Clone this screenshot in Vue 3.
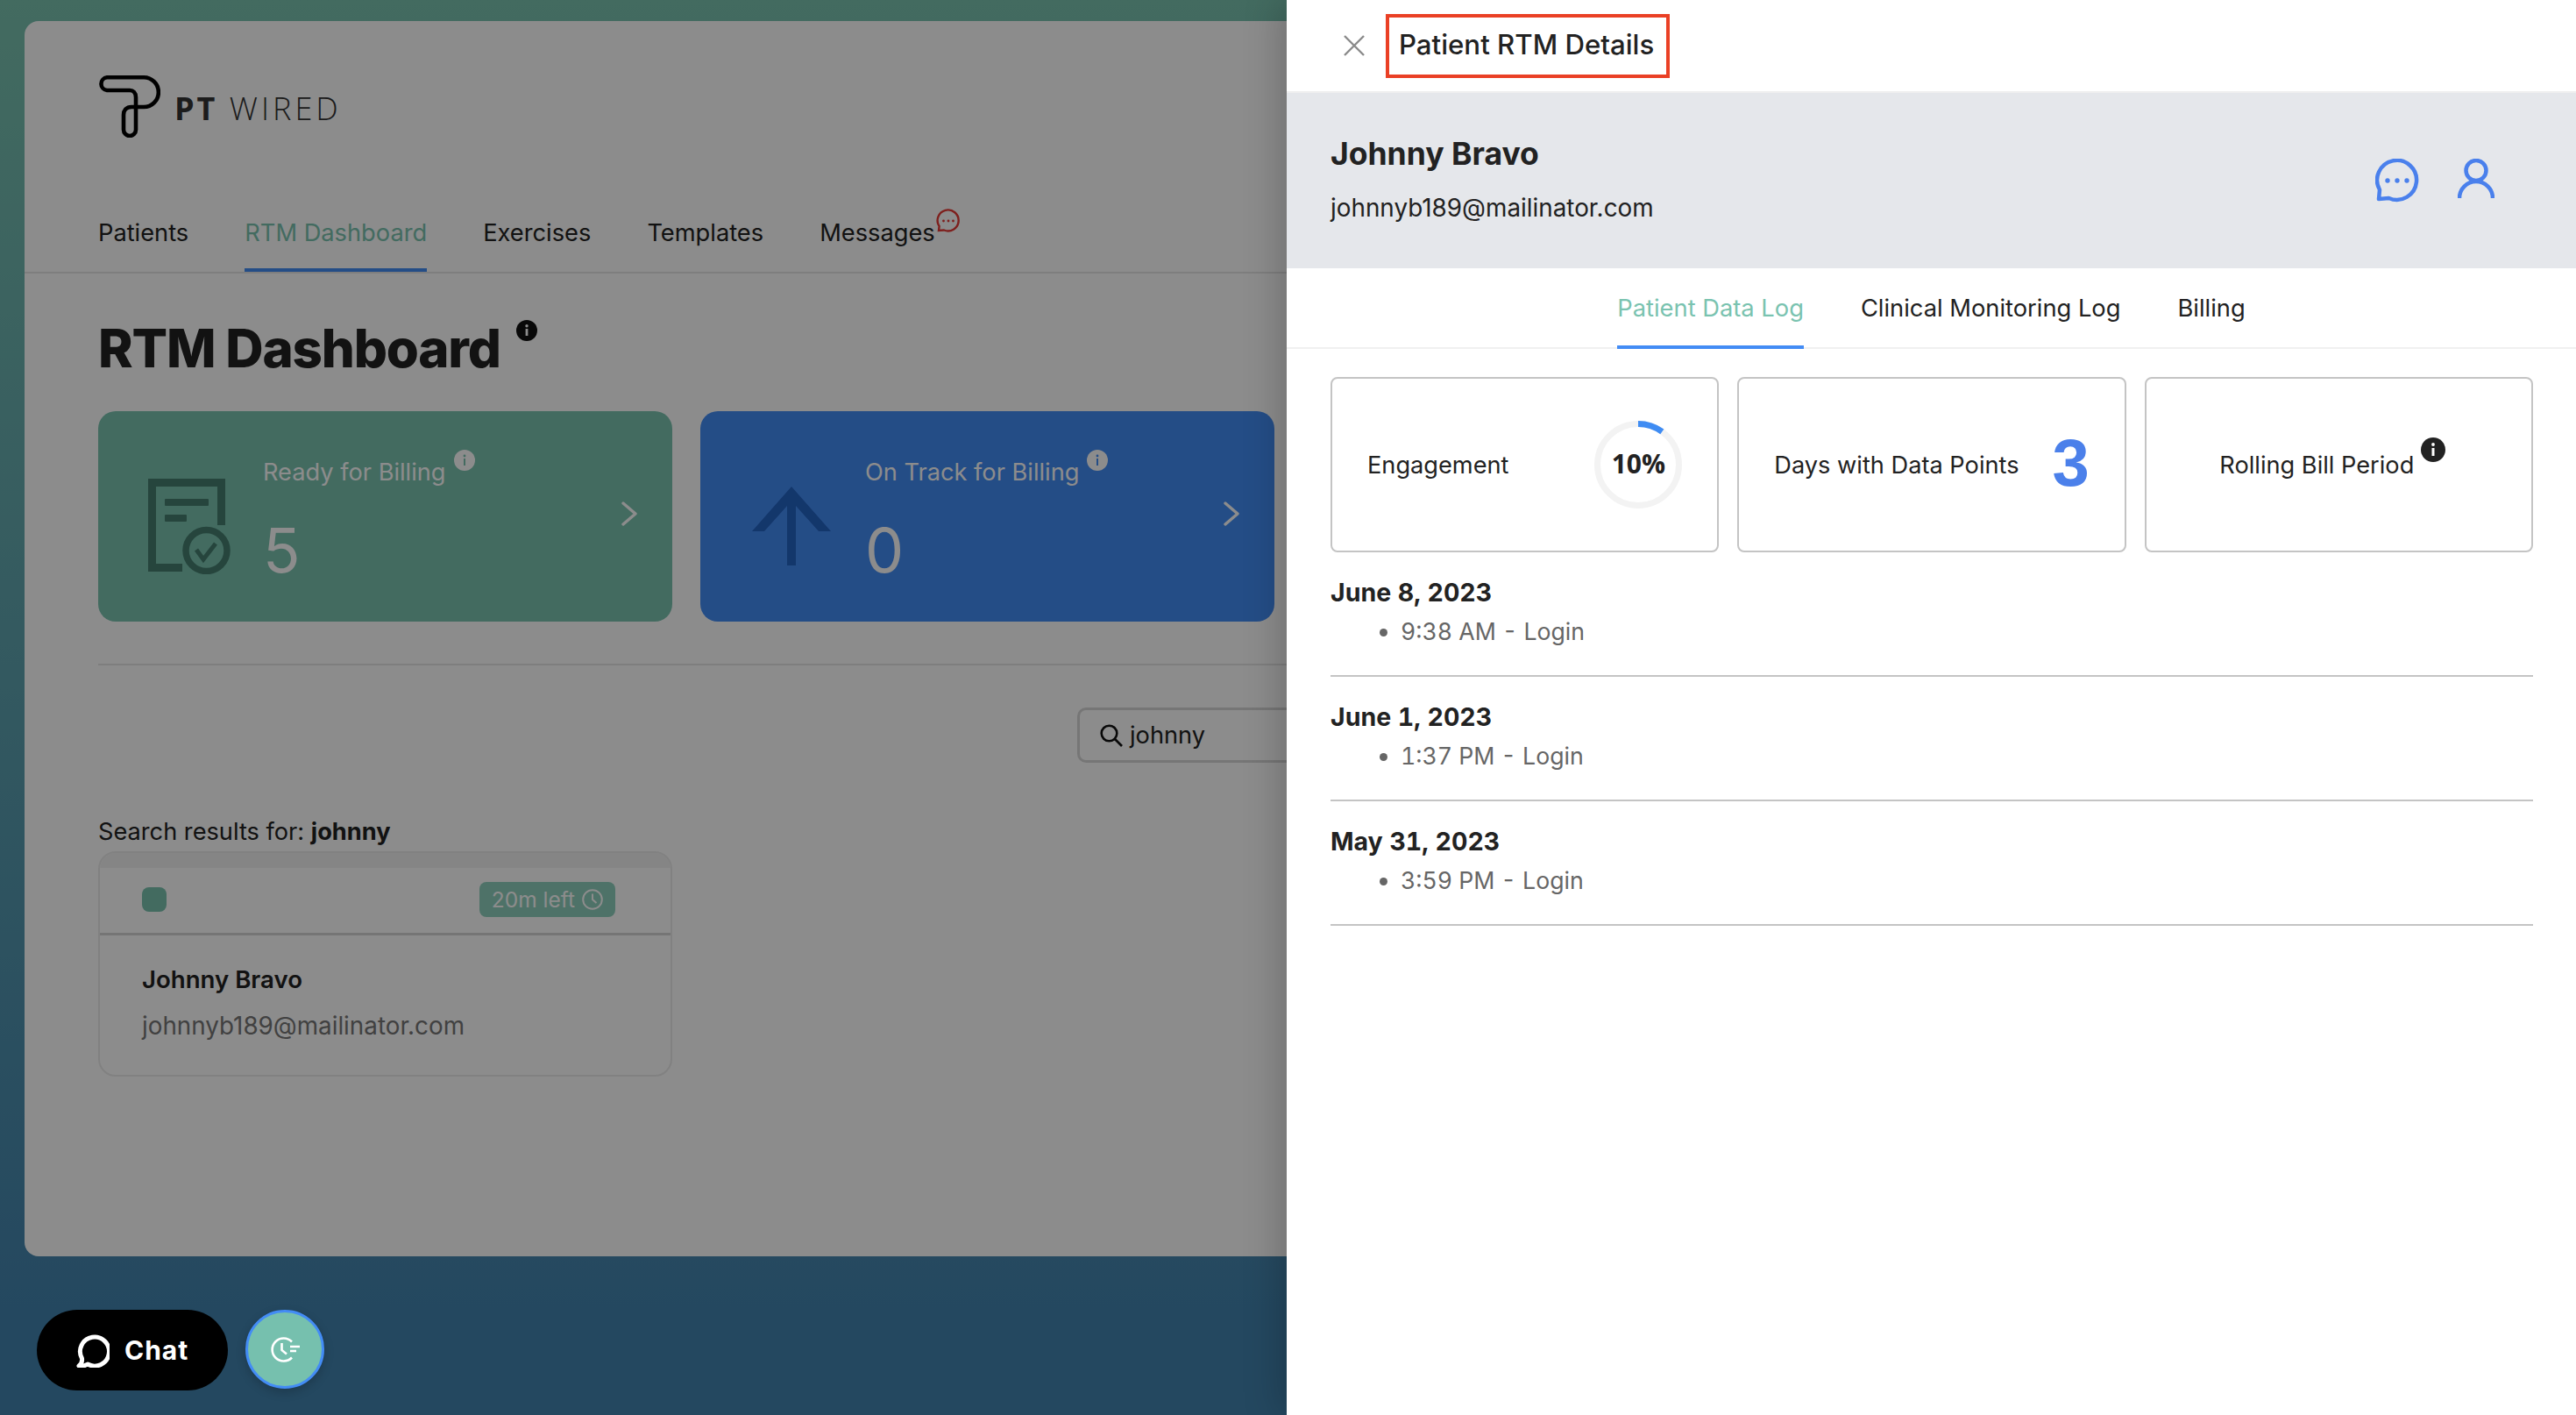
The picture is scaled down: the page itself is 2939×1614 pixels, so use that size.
<script setup>
const navItems = [
  { label: 'Patients' },
  { label: 'RTM Dashboard', active: true },
  { label: 'Exercises' },
  { label: 'Templates' },
  { label: 'Messages', badge: true }
]
const tabs = [
  { label: 'Patient Data Log', active: true },
  { label: 'Clinical Monitoring Log' },
  { label: 'Billing' }
]
const logs = [
  { date: 'June 8, 2023', item: '9:38 AM - Login' },
  { date: 'June 1, 2023', item: '1:37 PM - Login' },
  { date: 'May 31, 2023', item: '3:59 PM - Login' }
]
</script>

<template>
  <div class="stage">
    <div class="page">
      <div class="logo">
        <svg class="logo-mark" viewBox="0 0 71 71" fill="none" stroke="#000" stroke-width="4.600">
          <path d="M10 2.300H52A16.800 16.800 0 0 1 52 36H38C32 36 29 40 29 45V62A7 7 0 0 0 43 62V25C43 20 40 17 36 17H10A7.400 7.400 0 0 1 10 2.300Z" />
        </svg>
        <span class="logo-text"><b>PT</b> WIRED</span>
      </div>

      <nav class="nav">
        <a v-for="n in navItems" :key="n.label" class="nav-item" :class="{ active: n.active }">
          {{ n.label }}
          <svg v-if="n.badge" class="msg-badge" viewBox="0 0 28 28" fill="none" stroke="#e53935" stroke-width="2.400">
            <path d="M9 24.500A12 12 0 1 0 3.600 20L3 25Z" />
            <circle cx="8.500" cy="14" r="1.400" fill="#e53935" stroke="none" />
            <circle cx="14" cy="14" r="1.400" fill="#e53935" stroke="none" />
            <circle cx="19.500" cy="14" r="1.400" fill="#e53935" stroke="none" />
          </svg>
        </a>
      </nav>

      <div class="content">
        <div class="title-row">
          <h1>RTM Dashboard</h1>
          <svg class="info title-info" viewBox="0 0 24 24">
            <circle cx="12" cy="12" r="12" fill="#111" />
            <rect x="10.600" y="10" width="2.800" height="8" fill="#fff" />
            <circle cx="12" cy="6.800" r="1.700" fill="#fff" />
          </svg>
        </div>

        <div class="cards">
          <div class="stat-card green">
            <div class="card-icon">
              <svg class="doc-icon" viewBox="0 0 94 109" fill="none" stroke="#457f6f">
                <path d="M39 101.500H4.500V4.500H83.500V53" stroke-width="9" />
                <rect x="19" y="23" width="50" height="8" rx="1" fill="#457f6f" stroke="none" />
                <rect x="19" y="41" width="25" height="8" rx="1" fill="#457f6f" stroke="none" />
                <circle cx="66.500" cy="82" r="23.500" stroke-width="7.500" />
                <path d="M55 81L63 92L77 74" stroke-width="5" />
              </svg>
            </div>
            <div class="card-body">
              <div class="card-label">
                <span>Ready for Billing</span>
                <svg class="info" viewBox="0 0 24 24">
                  <circle cx="12" cy="12" r="12" fill="#fff" />
                  <rect x="11" y="10" width="2" height="8" fill="#7ac3b0" />
                  <circle cx="12" cy="7" r="1.400" fill="#7ac3b0" />
                </svg>
              </div>
              <div class="card-num">5</div>
            </div>
            <svg class="chev" viewBox="0 0 18 28" fill="none" stroke="#fff" stroke-width="3.400" stroke-linecap="round" stroke-linejoin="round">
              <path d="M2 2L16 14L2 26" />
            </svg>
          </div>

          <div class="stat-card blue">
            <div class="card-icon">
              <svg class="arrow-icon" viewBox="0 0 90 90">
                <polygon points="45,0 90,51 76,51 50,22 50,90 40,90 40,22 14,51 0,51" fill="#2464c3" />
              </svg>
            </div>
            <div class="card-body">
              <div class="card-label">
                <span>On Track for Billing</span>
                <svg class="info" viewBox="0 0 24 24">
                  <circle cx="12" cy="12" r="12" fill="#fff" />
                  <rect x="11" y="10" width="2" height="8" fill="#438cf5" />
                  <circle cx="12" cy="7" r="1.400" fill="#438cf5" />
                </svg>
              </div>
              <div class="card-num">0</div>
            </div>
            <svg class="chev" viewBox="0 0 18 28" fill="none" stroke="#fff" stroke-width="3.400" stroke-linecap="round" stroke-linejoin="round">
              <path d="M2 2L16 14L2 26" />
            </svg>
          </div>
        </div>

        <div class="divider"></div>

        <div class="search">
          <svg class="search-icon" viewBox="0 0 26 26" fill="none" stroke="#111" stroke-width="2.600">
            <circle cx="10.500" cy="10.500" r="8.800" />
            <path d="M17 17L25 25" />
          </svg>
          <span>johnny</span>
        </div>

        <p class="results">Search results for: <b>johnny</b></p>

        <div class="patient">
          <div class="patient-strip"></div>
          <div class="patient-head">
            <span class="square"></span>
            <span class="time">
              20m left
              <svg class="time-clock" viewBox="0 0 24 24" fill="none" stroke="#fff" stroke-width="2">
                <circle cx="12" cy="12" r="10.800" />
                <path d="M12 5.500V12L16.500 16" />
              </svg>
            </span>
          </div>
          <div class="patient-body">
            <div class="patient-name">Johnny Bravo</div>
            <div class="patient-mail">johnnyb189@mailinator.com</div>
          </div>
        </div>
      </div>
    </div>

    <div class="dim"></div>

    <div class="floating">
      <button class="chat">
        <svg class="chat-icon" viewBox="0 0 38 40" fill="none" stroke="#fff" stroke-width="5" stroke-linejoin="round">
          <path d="M13 36A16.500 16.500 0 1 0 6.500 29.500C7 33 5.500 36 3 38C6 38.500 10 38 13 36Z" />
        </svg>
        Chat
      </button>
      <button class="fab">
        <svg class="fab-icon" viewBox="0 0 36 29" fill="none" stroke="#fff" stroke-width="2.600">
          <path d="M26 5.500A13 13 0 1 0 26 23.500" />
          <path d="M14.500 7V15L20 19.500" />
          <path d="M24 11H35M24 16H31" />
        </svg>
      </button>
    </div>

    <aside class="panel">
      <header class="panel-head">
        <svg class="close" viewBox="0 0 24 24" fill="none" stroke="#8a8a8a" stroke-width="2.400">
          <path d="M1 1L23 23M23 1L1 23" />
        </svg>
        <div class="panel-title">Patient RTM Details</div>
      </header>

      <section class="identity">
        <div>
          <div class="identity-name">Johnny Bravo</div>
          <div class="identity-mail">johnnyb189@mailinator.com</div>
        </div>
        <div class="identity-actions">
          <svg class="act-chat" viewBox="0 0 50 50" fill="none" stroke="#4a80ec" stroke-width="4.500" stroke-linejoin="round">
            <path d="M15.500 45A22.500 22.500 0 1 0 5 35.500L4 46Z" />
            <circle cx="14" cy="25" r="2.700" fill="#4a80ec" stroke="none" />
            <circle cx="25" cy="25" r="2.700" fill="#4a80ec" stroke="none" />
            <circle cx="36" cy="25" r="2.700" fill="#4a80ec" stroke="none" />
          </svg>
          <svg class="act-user" viewBox="0 0 42 45" fill="none" stroke="#4a80ec" stroke-width="4.500">
            <circle cx="21" cy="13.500" r="11.500" />
            <path d="M2 45A19 19 0 0 1 40 45" />
          </svg>
        </div>
      </section>

      <div class="tabs">
        <a v-for="t in tabs" :key="t.label" class="tab" :class="{ active: t.active }">{{ t.label }}</a>
      </div>

      <div class="metrics">
        <div class="metric">
          <span>Engagement</span>
          <div class="ring">
            <svg viewBox="0 0 100 100" fill="none" stroke-width="7">
              <circle cx="50" cy="50" r="46.500" stroke="#f3f3f3" />
              <circle cx="50" cy="50" r="46.500" stroke="#3f8cf3" pathLength="100" stroke-dasharray="10 90" transform="rotate(-90 50 50)" />
            </svg>
            <b>10%</b>
          </div>
        </div>
        <div class="metric">
          <span>Days with Data Points</span>
          <b class="metric-num">3</b>
        </div>
        <div class="metric metric-center">
          <span>Rolling Bill Period</span>
          <svg class="info-dark" viewBox="0 0 28 28">
            <circle cx="14" cy="14" r="14" fill="#222" />
            <rect x="12.500" y="12" width="3" height="9" fill="#fff" />
            <circle cx="14" cy="8" r="1.900" fill="#fff" />
          </svg>
        </div>
      </div>

      <div class="log">
        <div v-for="l in logs" :key="l.date" class="log-entry">
          <div class="log-date">{{ l.date }}</div>
          <ul>
            <li>{{ l.item }}</li>
          </ul>
        </div>
      </div>
    </aside>
  </div>
</template>

<style scoped>
.stage {
  position: relative;
  width: 2939px;
  height: 1614px;
  overflow: hidden;
  background: linear-gradient(180deg, #7ac3b0 0%, #4283af 94%);
  font-family: Inter, "Liberation Sans", sans-serif;
  color: #222;
  padding: 24px 0 0 28px;
  box-sizing: border-box;
}
.page {
  width: 2883px;
  height: 1409px;
  background: #fff;
  border-radius: 16px 0 0 16px;
}
.logo {
  display: flex;
  align-items: center;
  padding: 62px 0 0 84px;
  height: 71px;
}
.logo-mark {
  width: 71px;
  height: 71px;
}
.logo-text {
  margin: 3px 0 0 16px;
  font-family: "Open Sans", sans-serif;
  font-size: 36px;
  font-weight: 300;
  letter-spacing: 4px;
  color: #333;
}
.logo-text b {
  font-weight: 700;
  letter-spacing: 3px;
}
.nav {
  display: flex;
  gap: 64px;
  margin-top: 91px;
  padding-left: 84px;
  border-bottom: 2px solid #e5e5e5;
  height: 62px;
}
.nav-item {
  position: relative;
  height: 60px;
  box-sizing: content-box;
  font-size: 27.250px;
  line-height: 36px;
  color: #222;
}
.nav-item.active {
  color: #7ac3b0;
  border-bottom: 4px solid #438cf5;
  height: 58px;
}
.msg-badge {
  position: absolute;
  left: 133px;
  top: -10px;
  width: 28px;
  height: 28px;
}
.content {
  padding: 49px 0 0 84px;
}
.title-row {
  display: flex;
  align-items: flex-start;
}
h1 {
  margin: 0;
  font-size: 60px;
  line-height: 72px;
  font-weight: 800;
  letter-spacing: -1.200px;
  color: #222;
}
.info {
  width: 24px;
  height: 24px;
  flex: none;
}
.title-info {
  margin: 4px 0 0 18px;
}
.cards {
  display: flex;
  gap: 32px;
  margin-top: 36px;
}
.stat-card {
  display: flex;
  align-items: flex-start;
  width: 655px;
  height: 240px;
  border-radius: 20px;
  color: #fff;
}
.green {
  background: #7ac3b0;
}
.blue {
  background: #438cf5;
}
.card-icon {
  display: flex;
  justify-content: center;
  align-items: center;
  box-sizing: border-box;
  width: 188px;
  height: 240px;
  padding: 22px 0 0 20px;
  flex: none;
}
.doc-icon {
  width: 94px;
  height: 109px;
}
.arrow-icon {
  width: 90px;
  height: 90px;
}
.card-body {
  flex: 1;
  padding-top: 52px;
}
.card-label {
  display: flex;
  gap: 9px;
  font-size: 27.200px;
  line-height: 36px;
}
.card-label .info {
  margin-top: -8px;
}
.card-num {
  margin-top: 31px;
  font-size: 70px;
  line-height: 80px;
}
.chev {
  width: 18px;
  height: 28px;
  margin: 103px 40px 0 0;
  flex: none;
}
.divider {
  height: 2px;
  width: 2800px;
  margin-top: 48px;
  background: #e5e5e5;
}
.search {
  display: flex;
  align-items: center;
  gap: 8px;
  box-sizing: border-box;
  width: 500px;
  height: 63px;
  margin: 48px 0 0 1117px;
  padding-left: 23px;
  border: 3px solid #d8d8d8;
  border-radius: 10px;
  font-size: 27.200px;
}
.search-icon {
  width: 26px;
  height: 26px;
}
.results {
  margin: 61px 0 0;
  font-size: 27.200px;
  line-height: 36px;
  color: #222;
}
.patient {
  width: 655px;
  height: 257px;
  margin-top: 4px;
  box-sizing: border-box;
  border: 2px solid #ececec;
  border-radius: 20px;
  overflow: hidden;
}
.patient-strip {
  height: 17px;
  background: #f2f2f2;
}
.patient-head {
  display: flex;
  align-items: center;
  justify-content: space-between;
  box-sizing: border-box;
  height: 77px;
  padding: 0 63px 3px 48px;
  border-bottom: 3px solid #d6d6d6;
}
.square {
  width: 28px;
  height: 28px;
  border-radius: 8px;
  background: #7ac3b0;
}
.time {
  display: flex;
  align-items: center;
  gap: 8px;
  height: 40px;
  padding: 0 14px;
  border-radius: 8px;
  background: #8fd0bd;
  color: #fff;
  font-size: 24.500px;
}
.time-clock {
  width: 24px;
  height: 24px;
}
.patient-body {
  padding: 32px 0 0 48px;
}
.patient-name {
  font-size: 27.600px;
  line-height: 36px;
  font-weight: 600;
}
.patient-mail {
  margin-top: 17px;
  font-size: 27.800px;
  line-height: 36px;
  color: #777;
}
.dim {
  position: absolute;
  inset: 0;
  background: rgba(0, 0, 0, 0.45);
  z-index: 1;
}
.floating {
  position: relative;
  z-index: 2;
  display: flex;
  align-items: flex-start;
  gap: 20px;
  margin: 61px 0 0 14px;
}
.chat {
  display: flex;
  align-items: center;
  gap: 17px;
  width: 218px;
  height: 92px;
  padding: 0 0 0 45px;
  border: 0;
  border-radius: 46px;
  background: #000;
  color: #fff;
  font-family: Inter, "Liberation Sans", sans-serif;
  font-size: 30px;
  font-weight: 700;
  letter-spacing: 1px;
  box-sizing: border-box;
}
.chat-icon {
  width: 38px;
  height: 40px;
}
.fab {
  display: flex;
  align-items: center;
  justify-content: center;
  width: 90px;
  height: 90px;
  padding: 0;
  border: 3px solid #438cf5;
  border-radius: 50%;
  background: #76c0ae;
  box-shadow: 0 4px 12px rgba(0, 0, 0, 0.2);
  box-sizing: border-box;
}
.fab-icon {
  width: 36px;
  height: 29px;
}
.panel {
  position: absolute;
  top: 0;
  right: 0;
  bottom: 0;
  z-index: 3;
  width: 1471px;
  background: #fff;
  box-shadow: -8px 0 40px rgba(0, 0, 0, 0.2);
}
.panel-head {
  display: flex;
  align-items: center;
  box-sizing: border-box;
  height: 106px;
  padding-left: 65px;
  border-bottom: 2px solid #efefef;
}
.close {
  width: 24px;
  height: 24px;
}
.panel-title {
  display: flex;
  align-items: center;
  box-sizing: border-box;
  width: 324px;
  height: 73px;
  margin: 0 0 0 24px;
  padding: 0 0 3px 11px;
  border: 4px solid #ea4025;
  font-size: 31.200px;
  font-weight: 500;
  color: #222;
}
.identity {
  display: flex;
  align-items: flex-start;
  justify-content: space-between;
  box-sizing: border-box;
  height: 200px;
  padding: 48px 93px 0 50px;
  background: #e5e7eb;
}
.identity-name {
  font-size: 35.500px;
  line-height: 44px;
  font-weight: 700;
  color: #222;
}
.identity-mail {
  margin-top: 21px;
  font-size: 27.850px;
  line-height: 36px;
  color: #222;
}
.identity-actions {
  display: flex;
  align-items: flex-start;
  gap: 44px;
  margin-top: 27px;
}
.act-chat {
  width: 50px;
  height: 50px;
}
.act-user {
  width: 42px;
  height: 45px;
}
.tabs {
  display: flex;
  justify-content: center;
  gap: 65px;
  height: 92px;
  box-sizing: border-box;
  border-bottom: 2px solid #f0f0f0;
}
.tab {
  box-sizing: border-box;
  height: 92px;
  padding-top: 28px;
  font-size: 27.300px;
  line-height: 36px;
  color: #222;
}
.tab.active {
  color: #7ac3b0;
  border-bottom: 4px solid #438cf5;
}
.metrics {
  display: grid;
  grid-template-columns: repeat(3, 1fr);
  gap: 21px;
  margin-top: 32px;
  padding: 0 49px 0 50px;
}
.metric {
  display: flex;
  align-items: center;
  justify-content: space-between;
  box-sizing: border-box;
  height: 200px;
  padding: 0 40px 0 40px;
  border: 2px solid #c4c4c4;
  border-radius: 8px;
  font-size: 27.200px;
  color: #222;
}
.metric-center {
  justify-content: center;
  gap: 8px;
  padding: 0 14px 0 0;
}
.ring {
  position: relative;
  display: flex;
  align-items: center;
  justify-content: center;
  width: 100px;
  height: 100px;
}
.ring svg {
  position: absolute;
  inset: 0;
}
.ring b {
  position: relative;
  margin-top: -3px;
  font-family: "Open Sans", sans-serif;
  font-size: 30px;
  font-weight: 700;
}
.metric-num {
  margin: -6px 0 0 0;
  font-family: "Liberation Sans", sans-serif;
  font-size: 76px;
  font-weight: 700;
  color: #4b80ea;
}
.info-dark {
  width: 28px;
  height: 28px;
  margin-top: -34px;
}
.log {
  padding: 0 49px 0 50px;
}
.log-entry {
  box-sizing: border-box;
  height: 142px;
  padding-top: 26px;
  border-bottom: 2px solid #c4c4c4;
}
.log-date {
  font-size: 28.500px;
  line-height: 40px;
  font-weight: 700;
  font-variant-numeric: tabular-nums;
  color: #222;
}
ul {
  margin: 4px 0 0;
  padding: 0 0 0 80px;
}
li {
  font-size: 26.700px;
  line-height: 40px;
  font-variant-numeric: tabular-nums;
  color: #666;
}
</style>
